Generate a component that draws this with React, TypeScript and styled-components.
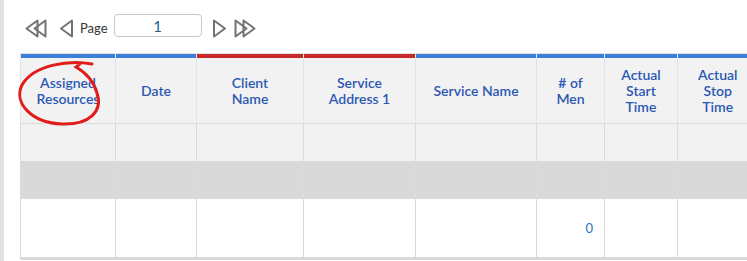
import React from "react";
import styled, { createGlobalStyle } from "styled-components";

const GlobalStyle = createGlobalStyle`
  html, body {
    margin: 0;
    padding: 0;
    background: #fff;
    overflow: hidden;
  }
  body {
    font-family: Lato, "Open Sans", sans-serif;
  }
`;

type Column = {
  title: React.ReactNode;
  width: number;
  accent: "blue" | "red";
};

const columns: Column[] = [
  { title: <>Assigned<br />Resources</>, width: 95, accent: "blue" },
  { title: "Date", width: 81, accent: "blue" },
  { title: <>Client<br />Name</>, width: 107, accent: "red" },
  { title: <>Service<br />Address 1</>, width: 112, accent: "red" },
  { title: "Service Name", width: 121, accent: "blue" },
  { title: <># of<br />Men</>, width: 68, accent: "blue" },
  { title: <>Actual<br />Start<br />Time</>, width: 73, accent: "blue" },
  { title: <>Actual<br />Stop<br />Time</>, width: 80, accent: "blue" },
];

const PagerIcon = ({ dir, double }: { dir: "left" | "right"; double?: boolean }) => {
  const w = double ? 23 : 15;
  const tri = (x: number) =>
    dir === "left"
      ? `M${x} 9.5 L${x + 11} 1.5 L${x + 11} 17.5 Z`
      : `M${x + 11} 9.5 L${x} 1.5 L${x} 17.5 Z`;
  return (
    <svg width={w} height={19} viewBox={`0 0 ${w} 19`}>
      <g fill="none" stroke="#737373" strokeWidth="2" strokeLinejoin="round">
        {double ? (
          <>
            <path d={tri(1.5)} />
            <path d={tri(9.5)} />
          </>
        ) : (
          <path d={tri(2)} />
        )}
      </g>
    </svg>
  );
};

const App = () => {
  return (
    <>
      <GlobalStyle />
      <Page>
        <Content>
          <Pager>
            <IconButton $gap={11}>
              <PagerIcon dir="left" double />
            </IconButton>
            <IconButton $gap={6}>
              <PagerIcon dir="left" />
            </IconButton>
            <PageLabel>Page</PageLabel>
            <PageInput defaultValue="1" />
            <IconButton $gap={7}>
              <PagerIcon dir="right" />
            </IconButton>
            <IconButton $gap={0}>
              <PagerIcon dir="right" double />
            </IconButton>
          </Pager>
          <TableWrap>
            <Grid>
              <colgroup>
                {columns.map((c, i) => (
                  <col key={i} style={{ width: c.width }} />
                ))}
              </colgroup>
              <thead>
                <tr>
                  {columns.map((c, i) => (
                    <HeadCell key={i} $accent={c.accent}>
                      {c.title}
                    </HeadCell>
                  ))}
                </tr>
              </thead>
              <tbody>
                <FilterRow>
                  {columns.map((_, i) => (
                    <Cell key={i} />
                  ))}
                </FilterRow>
                <GroupRow>
                  {columns.map((_, i) => (
                    <Cell key={i} />
                  ))}
                </GroupRow>
                <DataRow>
                  {columns.map((_, i) => (
                    <Cell key={i} $right={i === 5}>
                      {i === 5 ? "0" : ""}
                    </Cell>
                  ))}
                </DataRow>
              </tbody>
            </Grid>
            <Marker viewBox="0 0 110 80" width="110" height="80">
              <path
                d="M82 9 C60 5, 24 9, 12 30 C3 48, 22 68, 52 69 C80 70, 93 56, 87 38 C84 27, 78 19, 66 12 L71 8"
                fill="none"
                stroke="#e21b1b"
                strokeWidth="3"
                strokeLinecap="round"
              />
            </Marker>
          </TableWrap>
        </Content>
      </Page>
    </>
  );
};

export default App;

const Page = styled.div`
  display: flex;
  width: 747px;
  height: 261px;
  border-left: 4px solid #e2e2e2;
  box-sizing: border-box;
  overflow: hidden;
`;

const Content = styled.div`
  padding: 14px 0 0 16px;
  flex: 1;
`;

const Pager = styled.div`
  display: flex;
  align-items: center;
  height: 23px;
  padding-left: 5px;
  margin-bottom: 16px;
`;

const IconButton = styled.span<{ $gap: number }>`
  display: inline-flex;
  margin-right: ${(p) => p.$gap}px;
  margin-top: 6px;
`;

const PageLabel = styled.span`
  font-size: 13px;
  color: #333;
  margin-right: 6px;
  margin-top: 4px;
`;

const PageInput = styled.input`
  width: 88px;
  height: 23px;
  box-sizing: border-box;
  border: 1px solid #c8c8c8;
  border-radius: 4px;
  text-align: center;
  font-family: Lato, sans-serif;
  font-size: 15px;
  color: #1d5f8a;
  margin-right: 10px;
  padding: 0;
  outline: none;
`;

const TableWrap = styled.div`
  position: relative;
  width: 760px;
`;

const Grid = styled.table`
  table-layout: fixed;
  border-collapse: collapse;
  width: 737px;
  border-top: 1px solid #e2e2e2;
  border-left: 1px solid #dadada;
  border-bottom: 3px solid #d9d9d9;
`;

const HeadCell = styled.th<{ $accent: "blue" | "red" }>`
  height: 65px;
  padding: 4px 4px 0;
  background: #f2f2f2;
  box-shadow: inset 0 4px 0 ${(p) => (p.$accent === "red" ? "#c8292b" : "#3a80d8")};
  border-left: 1px solid #e4e4e4;
  border-bottom: 1px solid #dadada;
  color: #2c58b4;
  font-size: 14px;
  font-weight: 600;
  line-height: 16px;
  text-align: center;
  vertical-align: middle;
`;

const Cell = styled.td<{ $right?: boolean }>`
  border-left: 1px solid #dadada;
  padding: 0 11px;
  text-align: ${(p) => (p.$right ? "right" : "left")};
  color: #2f6fc0;
  font-size: 13px;
`;

const FilterRow = styled.tr`
  height: 37px;
  background: #f2f2f2;
`;

const GroupRow = styled.tr`
  height: 38px;
  background: #d9d9d9;
`;

const DataRow = styled.tr`
  height: 60px;
  background: #fff;
`;

const Marker = styled.svg`
  position: absolute;
  left: -10px;
  top: 2px;
  pointer-events: none;
`;
